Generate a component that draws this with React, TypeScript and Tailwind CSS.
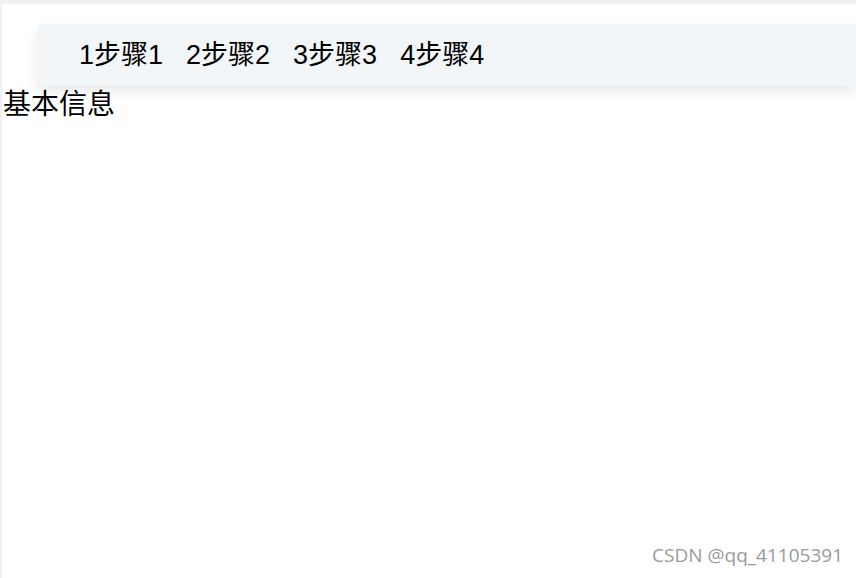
const steps = ["1步骤1", "2步骤2", "3步骤3", "4步骤4"]

export default function App() {
  return (
    <div
      className="relative flex h-[578px] w-[856px] flex-col overflow-hidden bg-[#f1f1f1] pl-[2px] pt-[4px]"
      style={{ fontFamily: '"Liberation Sans", "Noto Sans CJK SC", sans-serif' }}
    >
      <div className="flex flex-1 flex-col bg-white">
        <div className="ml-[36px] mt-[20px] flex h-[62px] items-center gap-[23px] rounded-l-[4px] bg-[#f3f6f9] pl-[41px] text-[27px] text-black shadow-[0_6px_14px_rgba(0,0,0,0.09)]">
          {steps.map((s) => (
            <span key={s}>{s}</span>
          ))}
        </div>
        <div className="pl-[1px] pt-[4px] text-[28px] leading-[30px] text-black">基本信息</div>
      </div>
      <div
        className="absolute bottom-[9px] right-[13px] text-[19px] text-[#9a9a9a]"
        style={{ fontFamily: '"Open Sans", sans-serif' }}
      >
        CSDN @qq_41105391
      </div>
    </div>
  )
}
